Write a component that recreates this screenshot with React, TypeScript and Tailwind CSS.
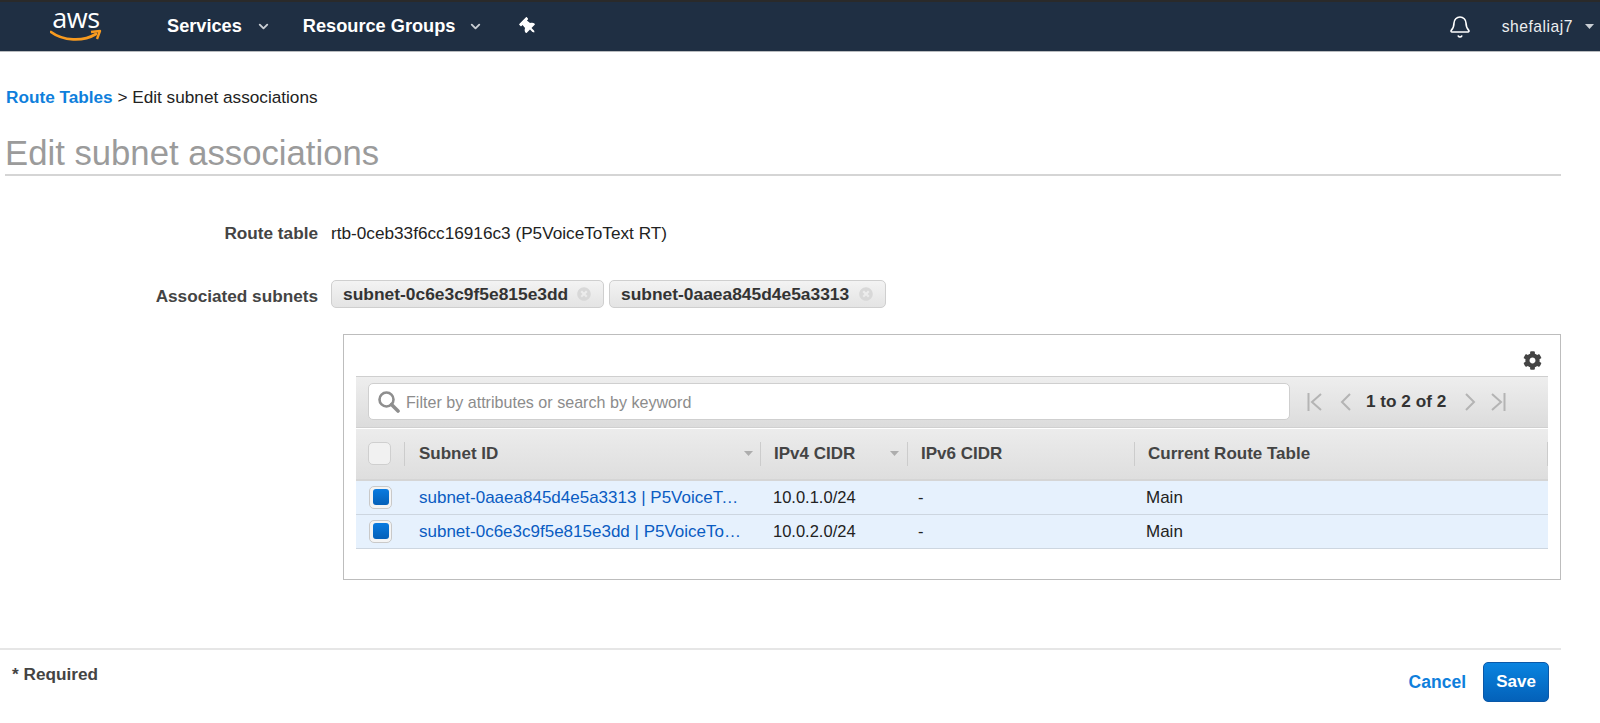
import { Bell, ChevronDown } from "lucide-react";
import { FaCog, FaThumbtack, FaTimesCircle } from "react-icons/fa";

const rows = [
  { id: "subnet-0aaea845d4e5a3313 | P5VoiceToText", cidr: "10.0.1.0/24" },
  { id: "subnet-0c6e3c9f5e815e3dd | P5VoiceToText", cidr: "10.0.2.0/24" },
];

const chips = [
  { label: "subnet-0c6e3c9f5e815e3dd", width: "w-[273px]" },
  { label: "subnet-0aaea845d4e5a3313", width: "w-[277px]" },
];

const SortCaret = () => (
  <svg width="9" height="5" viewBox="0 0 9 5" className="shrink-0">
    <polygon points="0,0 9,0 4.5,5" fill="#adadad" />
  </svg>
);

const PagerIcon = ({ d, width }: { d: string; width: number }) => (
  <svg width={width} height="18" viewBox={`0 0 ${width} 18`} className="shrink-0">
    <path d={d} fill="none" stroke="#b4b4b4" strokeWidth="2" />
  </svg>
);

const App = () => {
  return (
    <div className="h-[723px] w-[1600px] overflow-hidden bg-white font-['Liberation_Sans',Arial,sans-serif] text-[#222]">
      {/* Top nav */}
      <header className="flex h-[52px] items-center border-t-2 border-b border-t-[#2a2a2a] border-b-[#b9bcbf] bg-[#1f2f43] text-white">
        <div className="ml-[46px] flex h-full w-[60px] flex-col items-center pt-[1px]">
          <span className="-my-[4.5px] font-['Open_Sans',sans-serif] text-[27px] leading-[37px] font-medium tracking-[-0.5px]">aws</span>
          <svg width="52" height="14" viewBox="0 0 52 14" className="-mt-[2px]">
            <path d="M1 3 C13 12 33 13 46 5" fill="none" stroke="#f79a1f" strokeWidth="2.8" strokeLinecap="round" />
            <path d="M41 3 L50 2 L47 10" fill="none" stroke="#f79a1f" strokeWidth="2.4" strokeLinejoin="round" />
          </svg>
        </div>
        <span className="ml-[61px] text-[18.2px] font-bold">Services</span>
        <ChevronDown size={15} strokeWidth={3} className="ml-[14px] text-[#c9ced4]" />
        <span className="ml-[32px] text-[18.2px] font-bold">Resource Groups</span>
        <ChevronDown size={15} strokeWidth={3} className="ml-[13px] text-[#c9ced4]" />
        <FaThumbtack size={17} className="ml-[37px] -rotate-45 text-white" />
        <Bell size={24} strokeWidth={1.6} className="ml-auto text-white" />
        <span className="ml-[30px] text-[15.7px] tracking-[0.5px] text-[#eceef0]">shefaliaj7</span>
        <svg width="9" height="5" viewBox="0 0 9 5" className="mr-[6px] ml-[12px]">
          <polygon points="0,0 9,0 4.5,5" fill="#c9ced4" />
        </svg>
      </header>

      <main className="w-[1561px]">
        <div className="mt-[35px] pl-[6px] text-[17.2px] leading-5">
          <span className="font-bold text-[#0f7fdc]">Route Tables</span>
          <span> &gt; Edit subnet associations</span>
        </div>

        <h1 className="mt-[25px] ml-[5px] border-b-2 border-[#d5d5d5] text-[34.7px] leading-[42px] text-[#9b9b9b]">
          Edit subnet associations
        </h1>

        <div className="mt-[45px] flex items-center">
          <div className="w-[318px] text-right text-[17.2px] font-bold text-[#444]">Route table</div>
          <div className="ml-[13px] text-[17.2px]">rtb-0ceb33f6cc16916c3 (P5VoiceToText RT)</div>
        </div>

        <div className="mt-[33px] flex items-center">
          <div className="w-[318px] pt-[5px] text-right text-[17.2px] leading-5 font-bold text-[#444]">Associated subnets</div>
          <div className="ml-[13px] flex gap-[5px]">
            {chips.map((chip) => (
              <div
                key={chip.label}
                className={`flex h-[28px] items-center justify-between rounded-[5px] border border-[#cfcfcf] bg-linear-to-b from-[#f3f3f3] to-[#e4e4e4] pr-[12px] pl-[11px] ${chip.width}`}
              >
                <span className="text-[17.4px] leading-5 font-bold text-[#333]">{chip.label}</span>
                <FaTimesCircle size={14} className="text-[#d8d8d8]" />
              </div>
            ))}
          </div>
        </div>

        {/* Table panel */}
        <section className="mt-[26px] ml-[343px] h-[246px] border border-[#bdbdbd] px-[12px]">
          <div className="flex h-[41px] items-center justify-end pt-[10px] pr-[6px]">
            <FaCog size={19} className="text-[#444]" />
          </div>

          <div className="flex h-[52px] items-center border-t border-b border-t-[#cfcfcf] border-b-[#d0d0d0] bg-linear-to-b from-[#eeeeee] to-[#dcdcdc] pl-[12px]">
            <div className="flex h-[37px] w-[922px] items-center rounded-[5px] border border-[#cfcfcf] bg-white pl-[8px]">
              <svg width="23" height="23" viewBox="0 0 23 23" className="shrink-0">
                <circle cx="9.5" cy="9.5" r="7" fill="none" stroke="#8e8e8e" strokeWidth="2.6" />
                <path d="M14.5 14.5 L21 21" stroke="#8e8e8e" strokeWidth="3.6" strokeLinecap="round" />
              </svg>
              <span className="ml-[6px] text-[16.1px] text-[#8c8c8c]">Filter by attributes or search by keyword</span>
            </div>
            <div className="ml-[17px] flex items-center">
              <PagerIcon width={16} d="M1.5 0 V18 M14 1 L5 9 L14 17" />
              <div className="ml-[17px]">
                <PagerIcon width={11} d="M10 1 L2 9 L10 17" />
              </div>
              <span className="ml-[15px] text-[17.2px] font-bold text-[#333]">1 to 2 of 2</span>
              <div className="ml-[19px]">
                <PagerIcon width={11} d="M1 1 L9 9 L1 17" />
              </div>
              <div className="ml-[14px]">
                <PagerIcon width={16} d="M2 1 L11 9 L2 17 M14.5 0 V18" />
              </div>
            </div>
          </div>

          <div className="grid h-[53px] grid-cols-[48px_356px_147px_227px_1fr] items-center border-t border-b-2 border-t-white border-b-[#d5d5d5] bg-linear-to-b from-[#ececec] to-[#dedede] text-[17px] font-bold text-[#444]">
            <div className="pl-[12px]">
              <div className="h-[23px] w-[23px] rounded-[5px] border border-[#cfcfcf] bg-[#f1f1f1]" />
            </div>
            <div className="flex h-[24px] items-center justify-between border-l border-[#cccccc] pr-[7px] pl-[14px]">
              Subnet ID
              <SortCaret />
            </div>
            <div className="flex h-[24px] items-center justify-between border-l border-[#cccccc] pr-[8px] pl-[13px]">
              IPv4 CIDR
              <SortCaret />
            </div>
            <div className="flex h-[24px] items-center border-l border-[#cccccc] pl-[13px]">IPv6 CIDR</div>
            <div className="flex h-[24px] items-center border-r border-l border-[#cccccc] pl-[13px]">Current Route Table</div>
          </div>

          {rows.map((row) => (
            <div
              key={row.cidr}
              className="grid h-[34px] grid-cols-[48px_356px_147px_227px_1fr] items-center border-b border-[#cdd6e0] bg-[#e6f1fd] text-[16.5px]"
            >
              <div className="pl-[13px]">
                <div className="flex h-[23px] w-[23px] items-center justify-center rounded-[5px] border border-[#c9c9c9] bg-[#f4f4f4]">
                  <div className="h-[16px] w-[16px] rounded-[3px] bg-linear-to-b from-[#0a7be0] to-[#0560b8]" />
                </div>
              </div>
              <div className="pr-[17px] pl-[15px]">
                <div className="truncate text-[17px] text-[#0a5cc2]">{row.id}</div>
              </div>
              <div className="pl-[13px]">{row.cidr}</div>
              <div className="pl-[11px]">-</div>
              <div className="pl-[12px] text-[17px]">Main</div>
            </div>
          ))}
        </section>

        {/* Footer */}
        <footer className="mt-[68px] border-t-2 border-[#e6e6e6]">
          <div className="flex items-start justify-between pr-[12px]">
            <span className="mt-[12px] ml-[12px] text-[17.2px] font-bold text-[#444]">* Required</span>
            <div className="mt-[12px] flex items-center">
              <span className="text-[17.5px] font-bold text-[#0f7fdc]">Cancel</span>
              <button className="ml-[17px] h-[40px] w-[66px] rounded-[5px] border border-[#0a58a8] bg-linear-to-b from-[#0a84e0] to-[#0461b9] text-[17px] font-bold text-white">
                Save
              </button>
            </div>
          </div>
        </footer>
      </main>
    </div>
  );
};

export default App;
